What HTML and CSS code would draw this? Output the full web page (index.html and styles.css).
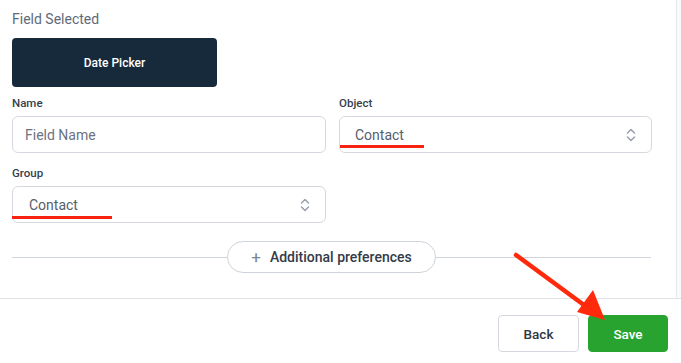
FILE: index.html
```html
<!DOCTYPE html>
<html>
<head>
<meta charset="utf-8">
<link rel="stylesheet" href="styles.css">
</head>
<body>
<div class="page">
  <div class="panel">
    <div class="content">
      <div class="title">Field Selected</div>
      <div class="tile">Date Picker</div>
      <div class="grid">
        <div class="field">
          <label class="label">Name</label>
          <div class="input"><span class="placeholder">Field Name</span></div>
        </div>
        <div class="field">
          <label class="label">Object</label>
          <div class="input select">
            <span class="value">Contact</span>
            <svg class="chev" width="10" height="16" viewBox="0 0 10 16"><path d="M1.5 6 L5 2.5 L8.5 6 M1.5 10 L5 13.5 L8.5 10" fill="none" stroke="#9aa1ad" stroke-width="1.5" stroke-linecap="round" stroke-linejoin="round"/></svg>
            <span class="mark mark-object"></span>
          </div>
        </div>
        <div class="field">
          <label class="label">Group</label>
          <div class="input select">
            <span class="value value-group">Contact</span>
            <svg class="chev" width="10" height="16" viewBox="0 0 10 16"><path d="M1.5 6 L5 2.5 L8.5 6 M1.5 10 L5 13.5 L8.5 10" fill="none" stroke="#9aa1ad" stroke-width="1.5" stroke-linecap="round" stroke-linejoin="round"/></svg>
            <span class="mark mark-group"></span>
          </div>
        </div>
      </div>
      <div class="divider">
        <span class="line"></span>
        <button class="pill"><span class="plus">+</span>Additional preferences</button>
        <span class="line"></span>
      </div>
    </div>
    <div class="track"></div>
  </div>
  <div class="footer">
    <button class="btn back">Back</button>
    <button class="btn save">Save</button>
  </div>
  <svg class="arrow" width="681" height="363" viewBox="0 0 681 363">
    <line x1="516" y1="255" x2="588" y2="308" stroke="#ff2a0c" stroke-width="4.5" stroke-linecap="round"/>
    <polygon points="577,312 593,290 605,320" fill="#ff2a0c"/>
  </svg>
</div>
</body>
</html>
```

FILE: styles.css
```css
* { box-sizing: border-box; }
html, body { margin: 0; padding: 0; background: #fff; }
body { font-family: Roboto, "Noto Sans", "Liberation Sans", sans-serif; width: 681px; height: 363px; overflow: hidden; }
.page { position: relative; width: 681px; height: 363px; }
.panel { display: flex; height: 299px; border-bottom: 1px solid #dfe3e8; }
.content { width: 677px; padding: 10px 25px 0 12px; border-right: 1px solid #e6e8ec; }
.track { flex: 1; background: #fafafa; }
.title { font-size: 14px; line-height: 19px; color: #5f6a78; height: 18px; }
.tile { margin-top: 10px; width: 205px; height: 49px; background: #172a3b; border-radius: 4px; color: #fff; font-size: 12px; font-weight: 500; display: flex; align-items: center; justify-content: center; }
.grid { display: grid; grid-template-columns: 314px 313px; column-gap: 13px; row-gap: 13px; margin-top: 9px; }
.field { display: flex; flex-direction: column; }
.label { font-size: 11.5px; line-height: 15px; font-weight: 500; color: #373f4c; margin-bottom: 5px; }
.input { position: relative; height: 37px; border: 1px solid #d5d9df; border-radius: 6px; display: flex; align-items: center; padding-left: 12px; font-size: 14px; }
.placeholder { color: #6b7380; }
.select { padding-left: 15px; padding-right: 15px; justify-content: space-between; }
.value { color: #555e6b; }
.value-group { padding-left: 1px; }
.chev { display: block; }
.mark { position: absolute; height: 3px; background: #f5230f; }
.mark-object { left: 0; top: 28px; width: 84px; }
.mark-group { left: -1px; top: 29px; width: 100px; }
.divider { display: flex; align-items: center; margin-top: 18px; height: 32px; }
.line { flex: 1; height: 1px; background: #cfd4db; }
.pill { height: 32px; width: 209px; border: 1px solid #cfd4db; border-radius: 16px; background: #fff; font-family: inherit; font-size: 14px; font-weight: 500; color: #333b48; display: flex; align-items: center; justify-content: center; padding: 0; }
.plus { color: #7d8592; font-size: 17px; font-weight: 400; margin-right: 9px; line-height: 1; }
.footer { display: flex; justify-content: flex-end; gap: 9px; padding: 16px 13px 0 0; }
.btn { height: 37px; border-radius: 4px; font-family: inherit; font-size: 13.5px; font-weight: 500; padding: 0; }
.back { width: 81px; background: #fff; border: 1px solid #d5d9df; color: #2f3744; }
.save { width: 80px; background: #29a32f; border: 1px solid #29a32f; color: #fff; }
.arrow { position: absolute; left: 0; top: 0; pointer-events: none; }
```
